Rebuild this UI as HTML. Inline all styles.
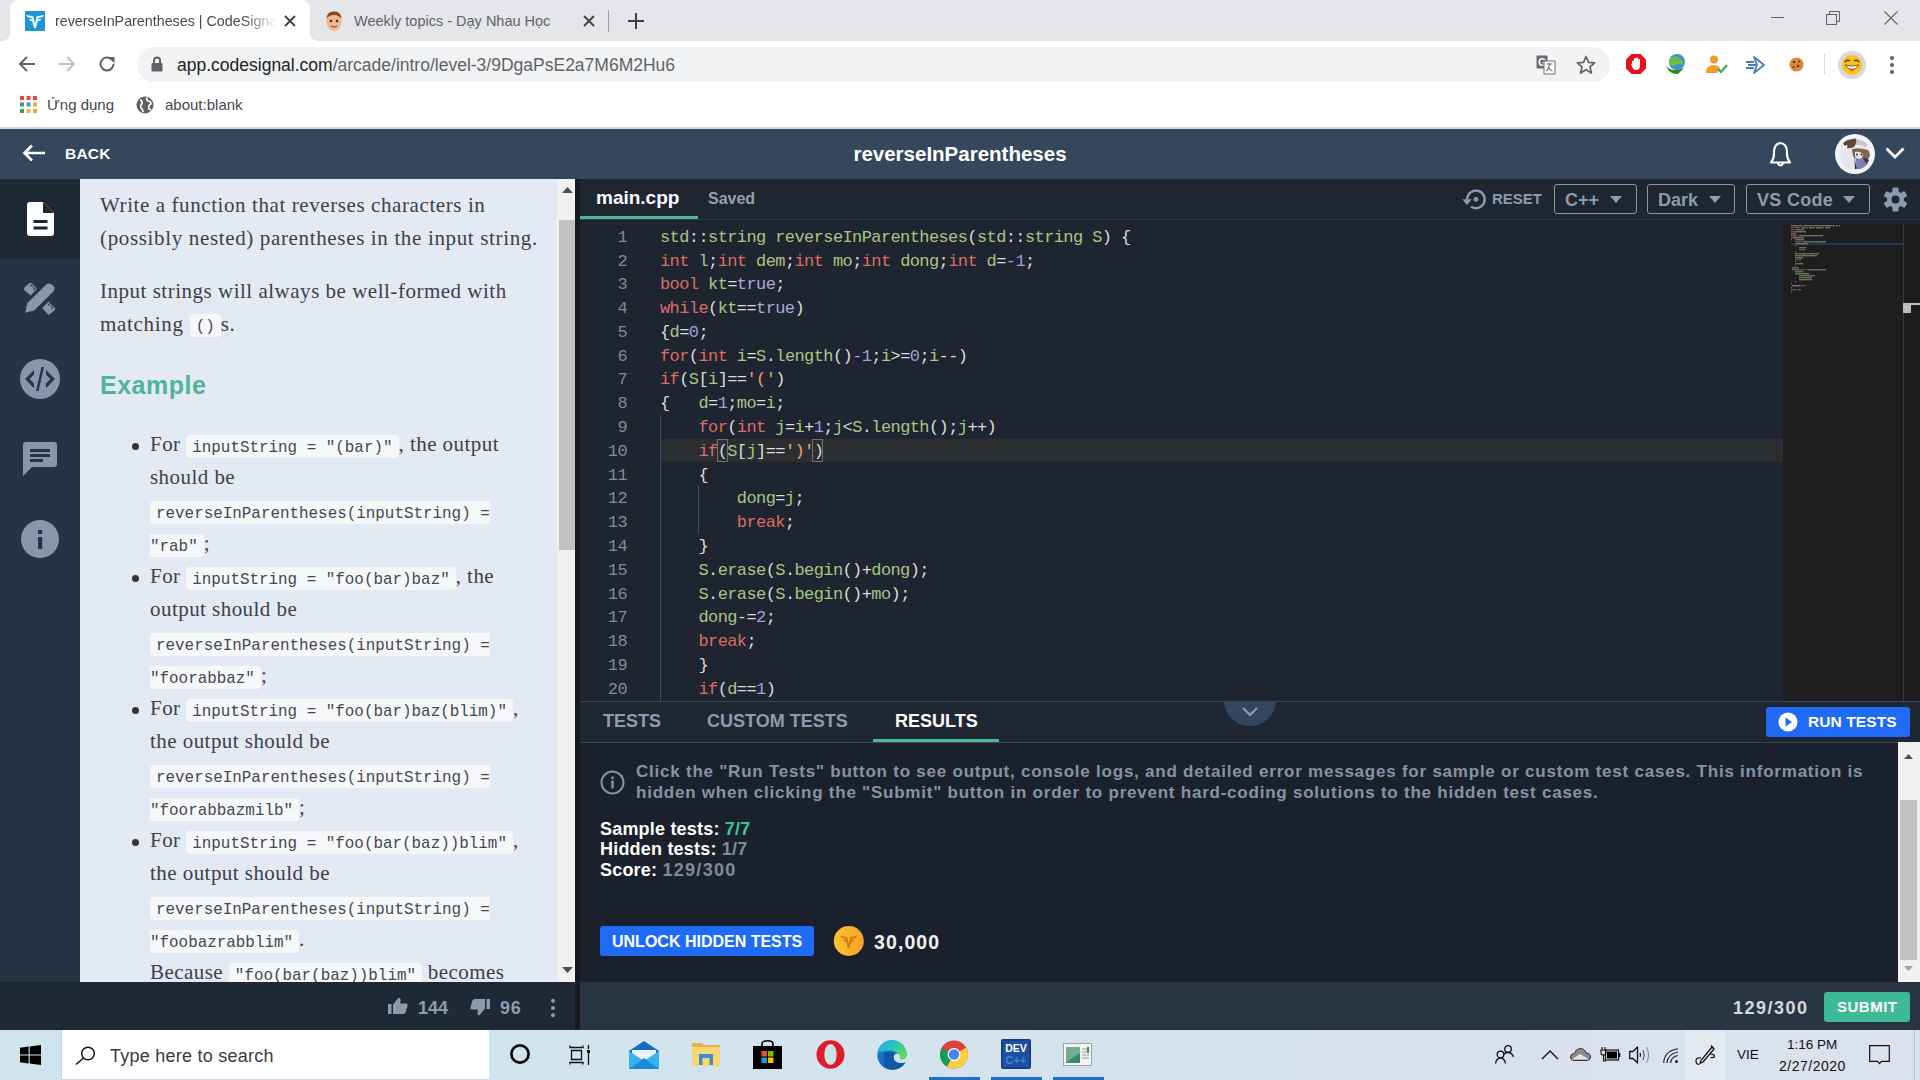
<!DOCTYPE html>
<html><head><meta charset="utf-8">
<style>
*{box-sizing:border-box;margin:0;padding:0}
html,body{width:1920px;height:1080px;overflow:hidden;background:#fff;font-family:"Liberation Sans",sans-serif}
.a{position:absolute}
svg{position:absolute;overflow:visible}
/* chrome */
#tabs{left:0;top:0;width:1920px;height:41px;background:#e4e6e9}
#tab1{left:10px;top:0;width:300px;height:41px;background:#fff;border-radius:8px 8px 0 0}
.tabt{font-size:14.3px;color:#45494d;top:12.5px;white-space:nowrap}
#toolbar{left:0;top:41px;width:1920px;height:46px;background:#fff}
#omni{left:137px;top:47px;width:1473px;height:35px;background:#f1f3f4;border-radius:18px}
#bm{left:0;top:87px;width:1920px;height:40px;background:#fff}
#bmline{left:0;top:127px;width:1920px;height:2px;background:#d3d6da}
/* codesignal header */
#hdr{left:0;top:129px;width:1920px;height:50px;background:#34475c}
#side{left:0;top:179px;width:80px;height:803px;background:#253345}
#sideact{left:0;top:179px;width:80px;height:80px;background:#1f2835}
#desc{left:80px;top:179px;width:477px;height:803px;background:#e4eaf3;overflow:hidden}
#dscroll{left:557px;top:179px;width:18px;height:803px;background:#f1f1f1}
#dthumb{left:559px;top:220px;width:16px;height:330px;background:#c1c1c1}
#divider{left:575px;top:179px;width:5px;height:851px;background:#171a20}
#lfoot{left:0;top:982px;width:575px;height:48px;background:#1f2936}
/* editor */
#edtop{left:580px;top:179px;width:1340px;height:41px;background:#1e2631;border-bottom:1px solid #2f3a47}
#code{left:580px;top:220px;width:1340px;height:481px;background:#1e2430}
#rtabs{left:580px;top:701px;width:1340px;height:42px;background:#1f2733;border-top:1px solid #3a4757;border-bottom:1px solid #3a4757}
#results{left:580px;top:743px;width:1318px;height:239px;background:#1b212c}
#rscroll{left:1898px;top:742px;width:22px;height:240px;background:#f1f1f1}
#rfoot{left:580px;top:982px;width:1340px;height:48px;background:#2a3544}
/* taskbar */
#task{left:0;top:1030px;width:1920px;height:50px;background:#d5e3ee}
#search{left:61px;top:1030px;width:428px;height:50px;background:#fff;border:1px solid #c8d3dc}

.dp{position:absolute;left:20px;font-family:"Liberation Serif",serif;font-size:21px;line-height:33px;letter-spacing:0.45px;color:#3b414c;white-space:nowrap}
.ic{font-family:"Liberation Mono",monospace;font-size:15.9px;line-height:10px;letter-spacing:0;background:#f6f7f9;border-radius:4px;padding:3.5px 6px 1.5px;color:#424853}
.bul{position:absolute;left:51.5px;width:7px;height:7px;border-radius:50%;background:#30353d}

.ln{position:absolute;left:580px;width:47px;text-align:right;font-family:"Liberation Mono",monospace;font-size:17px;letter-spacing:-0.6px;color:#838a94;line-height:23.78px;white-space:pre}
.cl{position:absolute;left:660px;font-family:"Liberation Mono",monospace;font-size:17px;letter-spacing:-0.6px;color:#dcdcdc;line-height:23.78px;white-space:pre}
.k{color:#dc6e63}.i{color:#a9c684}.n{color:#a0a0de}.t{color:#a9a9dc}.s{color:#eea45f}
.dd{position:absolute;top:184px;height:30px;border:1.5px solid #8a97aa;border-radius:3px}
.ddt{position:absolute;top:190px;font-size:18px;font-weight:700;color:#8d9bb0;white-space:nowrap}
.tri{position:absolute;top:196px;width:0;height:0;border-left:6.5px solid transparent;border-right:6.5px solid transparent;border-top:7px solid #8d9bb0}
</style></head><body>
<div class="a" id="tabs"></div>
<div class="a" style="left:2px;top:30px;width:316px;height:11px;background:#fff"></div>
<div class="a" style="left:0;top:25px;width:10px;height:16px;background:#e4e6e9;border-bottom-right-radius:8px"></div>
<div class="a" style="left:310px;top:25px;width:10px;height:16px;background:#e4e6e9;border-bottom-left-radius:8px"></div>
<div class="a" id="tab1"></div>
<div class="a" id="toolbar"></div>
<div class="a" id="omni"></div>
<div class="a" id="bm"></div>
<div class="a" id="bmline"></div>

<!-- TAB 1 -->
<svg style="left:25px;top:11px" width="20" height="20" viewBox="0 0 20 20"><rect width="20" height="20" fill="#1e96d2"/><path d="M0.9 3.9L8.4 5.3L10 12.6L11.6 5.3L19.1 3.9L17.4 6.3L13.4 7.1L13.1 8.2L16.3 8.1L14.7 9.9L12.8 10.2L10.8 17.3L9.2 17.3L7.2 10.2L5.3 9.9L3.7 8.1L6.9 8.2L6.6 7.1L2.6 6.3Z" fill="#e8fbff"/></svg>
<div class="a tabt" style="left:55px;width:222px;overflow:hidden;-webkit-mask-image:linear-gradient(90deg,#000 85%,transparent)">reverseInParentheses | CodeSignal</div>
<svg style="left:284px;top:15px" width="12" height="12" viewBox="0 0 12 12"><path d="M1 1L11 11M11 1L1 11" stroke="#3c4043" stroke-width="1.8"/></svg>
<!-- TAB 2 -->
<svg style="left:325px;top:10px" width="18" height="22" viewBox="0 0 18 22"><ellipse cx="9" cy="12" rx="7.5" ry="9" fill="#f2b88b"/><path d="M1.5 9 Q2 1 9 1.5 Q16 1 16.5 9 Q14 5 9 5 Q4 5 1.5 9Z" fill="#8a4b22"/><circle cx="6" cy="11" r="1.3" fill="#333"/><circle cx="12" cy="11" r="1.3" fill="#333"/><path d="M6 16 Q9 18 12 16" stroke="#a33" stroke-width="1.2" fill="none"/></svg>
<div class="a tabt" style="left:354px;color:#5f6368;font-size:14.5px">Weekly topics - Dạy Nhau Học</div>
<svg style="left:583px;top:15px" width="12" height="12" viewBox="0 0 12 12"><path d="M1 1L11 11M11 1L1 11" stroke="#3c4043" stroke-width="1.8"/></svg>
<div class="a" style="left:608px;top:10px;width:1px;height:22px;background:#9aa0a6"></div>
<svg style="left:627px;top:12px" width="18" height="18" viewBox="0 0 18 18"><path d="M9 1V17M1 9H17" stroke="#3c4043" stroke-width="2"/></svg>
<!-- window controls -->
<div class="a" style="left:1771px;top:17px;width:13px;height:1px;background:#5f6368"></div>
<svg style="left:1826px;top:11px" width="14" height="14" viewBox="0 0 14 14"><rect x="0.5" y="3.5" width="10" height="10" fill="none" stroke="#5f6368"/><path d="M3.5 3.5V0.5H13.5V10.5H10.5" fill="none" stroke="#5f6368"/></svg>
<svg style="left:1884px;top:11px" width="14" height="14" viewBox="0 0 14 14"><path d="M0.5 0.5L13.5 13.5M13.5 0.5L0.5 13.5" stroke="#5f6368" stroke-width="1.1"/></svg>
<!-- toolbar -->
<svg style="left:18px;top:55px" width="18" height="18" viewBox="0 0 18 18"><path d="M17 9H2M9 2L2 9L9 16" stroke="#5f6368" stroke-width="2" fill="none"/></svg>
<svg style="left:58px;top:55px" width="18" height="18" viewBox="0 0 18 18"><path d="M1 9H16M9 2L16 9L9 16" stroke="#bdc1c6" stroke-width="2" fill="none"/></svg>
<svg style="left:98px;top:55px" width="18" height="18" viewBox="0 0 18 18"><path d="M15.5 9A6.5 6.5 0 1 1 13.6 4.4" stroke="#5f6368" stroke-width="2" fill="none"/><path d="M10 2H16.5V8.5Z" fill="#5f6368"/></svg>
<svg style="left:151px;top:56px" width="12" height="16" viewBox="0 0 12 16"><path d="M3 7V4.5A3 3 0 0 1 9 4.5V7" stroke="#5f6368" stroke-width="2" fill="none"/><rect x="0.5" y="7" width="11" height="8.5" rx="1" fill="#5f6368"/></svg>
<div class="a" style="left:177px;top:55px;font-size:17.5px;color:#202124;white-space:nowrap">app.codesignal.com<span style="color:#5f6368">/arcade/intro/level-3/9DgaPsE2a7M6M2Hu6</span></div>
<svg style="left:1536px;top:55px" width="20" height="20" viewBox="0 0 20 20"><rect x="0.5" y="0.5" width="11" height="13" rx="1" fill="#6a6d70"/><text x="2.3" y="11" font-family="Liberation Sans" font-weight="700" font-size="10" fill="#fff">G</text><path d="M8 6H19V19H8Z" fill="#fff" stroke="#6a6d70"/><path d="M10.5 9H16.5M13.5 8V9.5Q13 14 10.5 16M12 12Q14 15 16.5 16" stroke="#6a6d70" stroke-width="1.1" fill="none"/></svg>
<svg style="left:1576px;top:55px" width="20" height="20" viewBox="0 0 20 20"><path d="M10 1.5L12.5 7.3L18.7 7.8L14 11.9L15.4 18L10 14.8L4.6 18L6 11.9L1.3 7.8L7.5 7.3Z" stroke="#5f6368" stroke-width="1.7" fill="none" stroke-linejoin="round"/></svg>
<svg style="left:1625px;top:53px" width="22" height="22" viewBox="0 0 22 22"><path d="M6.5 1H15.5L21 6.5V15.5L15.5 21H6.5L1 15.5V6.5Z" fill="#e8101d"/><path d="M7 13V8.5Q7 7.5 8 7.5Q9 7.5 9 8.5V6Q9 5 10 5Q11 5 11 6V5.5Q11 4.5 12 4.5Q13 4.5 13 5.5V7Q13 6 14 6Q15 6 15 7V13Q15 17 11 17Q8.5 17 7.5 14.5L6 11.5Q6 10.5 7 11Z" fill="#fff"/></svg>
<svg style="left:1664px;top:53px" width="24" height="22" viewBox="0 0 24 22"><circle cx="13" cy="9" r="8" fill="#3d8fd6"/><path d="M6 6Q10 2 14 4Q18 6 20 12Q15 10 12 12Q8 14 6 11Z" fill="#6fbf3b"/><path d="M2 13Q8 20 20 15L14 21Q6 22 2 13Z" fill="#2e8b2e"/></svg>
<svg style="left:1705px;top:54px" width="24" height="22" viewBox="0 0 24 22"><circle cx="9" cy="5.5" r="4" fill="#f29b2f"/><path d="M1 19Q1 11 9 11Q13 11 15 14L12 19Z" fill="#f29b2f"/><path d="M13 15L16 18L22 11" stroke="#3aa757" stroke-width="2.2" fill="none"/></svg>
<svg style="left:1745px;top:54px" width="24" height="22" viewBox="0 0 24 22"><path d="M9 3L19 11L9 19L12 11Z" stroke="#4a7bb5" stroke-width="1.8" fill="none" stroke-linejoin="round"/><path d="M1 8H9M3 11H12M1 14H9" stroke="#4a7bb5" stroke-width="1.8"/></svg>
<svg style="left:1788px;top:56px" width="17" height="17" viewBox="0 0 17 17"><circle cx="8.5" cy="8.5" r="7" fill="#d78a3a"/><circle cx="6" cy="6" r="1.3" fill="#6b3a12"/><circle cx="10" cy="10" r="1.3" fill="#6b3a12"/><circle cx="11" cy="5.5" r="1" fill="#6b3a12"/><circle cx="5.5" cy="11" r="1" fill="#6b3a12"/></svg>
<div class="a" style="left:1824px;top:54px;width:1px;height:20px;background:#dadce0"></div>
<div class="a" style="left:1838px;top:51px;width:28px;height:28px;border-radius:50%;background:#d9d9d9"></div>
<svg style="left:1841px;top:54px" width="22" height="22" viewBox="0 0 22 22"><circle cx="11" cy="11" r="10" fill="#f7c21a"/><path d="M4 8Q6 5 9 7M13 7Q16 5 18 8" stroke="#5a3a00" stroke-width="1.5" fill="none"/><path d="M4 11Q11 20 18 11Q11 13 4 11Z" fill="#fff" stroke="#5a3a00" stroke-width="0.8"/><path d="M8 15Q11 19 14 15Z" fill="#e53935"/></svg>
<svg style="left:1889px;top:55px" width="6" height="20" viewBox="0 0 6 20"><circle cx="3" cy="3" r="2.1" fill="#5f6368"/><circle cx="3" cy="10" r="2.1" fill="#5f6368"/><circle cx="3" cy="17" r="2.1" fill="#5f6368"/></svg>
<!-- bookmarks -->
<svg style="left:20px;top:96px" width="17" height="17" viewBox="0 0 17 17"><rect x="0.0" y="0.0" width="4" height="4" fill="#e04a3f"/><rect x="6.5" y="0.0" width="4" height="4" fill="#e04a3f"/><rect x="13.0" y="0.0" width="4" height="4" fill="#e04a3f"/><rect x="0.0" y="6.5" width="4" height="4" fill="#3aa05a"/><rect x="6.5" y="6.5" width="4" height="4" fill="#4a8af0"/><rect x="13.0" y="6.5" width="4" height="4" fill="#f2a93b"/><rect x="0.0" y="13.0" width="4" height="4" fill="#3aa05a"/><rect x="6.5" y="13.0" width="4" height="4" fill="#f2b33b"/><rect x="13.0" y="13.0" width="4" height="4" fill="#f2a93b"/></svg>
<div class="a" style="left:47px;top:96px;font-size:15px;color:#45484c;white-space:nowrap">Ứng dụng</div>
<svg style="left:136px;top:96px" width="18" height="18" viewBox="0 0 18 18"><circle cx="9" cy="9" r="8.5" fill="#5f6368"/><path d="M4 4Q7 5 6 8Q4 9 5 12Q7 13 7 16M11 1.5Q10 4 12 5Q15 5 15 8Q12 9 13 13L15 14" stroke="#fff" stroke-width="1.6" fill="none"/></svg>
<div class="a" style="left:165px;top:96px;font-size:15px;color:#45484c;white-space:nowrap">about:blank</div>
<div class="a" id="hdr"></div>

<!-- CS header -->
<svg style="left:22px;top:144px" width="24" height="18" viewBox="0 0 24 18"><path d="M23 9H2.5M10 1.5L2.5 9L10 16.5" stroke="#fff" stroke-width="2.6" fill="none"/></svg>
<div class="a" style="left:65px;top:145px;font-size:15.5px;font-weight:700;color:#fff;letter-spacing:0.2px">BACK</div>
<div class="a" style="left:0;top:142px;width:1920px;text-align:center;font-size:20.5px;font-weight:700;color:#fff">reverseInParentheses</div>
<svg style="left:1768px;top:141px" width="25" height="27" viewBox="0 0 25 27"><path d="M3 21.5Q6.5 17 6 11Q6 3 12.5 2Q19 3 19 11Q18.5 17 22 21.5Z" stroke="#fff" stroke-width="2.1" fill="none" stroke-linejoin="round"/><path d="M9.5 22Q12.5 27 15.5 22" stroke="#fff" stroke-width="2" fill="none"/></svg>
<div class="a" style="left:1835px;top:134px;width:40px;height:40px;border-radius:50%;background:#f1f3f8"></div>
<svg style="left:1839px;top:138px" width="32" height="32" viewBox="0 0 32 32"><defs><clipPath id="av"><circle cx="16" cy="16" r="16"/></clipPath></defs><g clip-path="url(#av)"><rect width="32" height="32" fill="#ecebf2"/><path d="M14 2Q22 1 29 6L27 9Q20 6 14 7Z" fill="#c9c5d4"/><path d="M2 7Q5 2 11 1.5L17 0.5Q18 5 15 9Q10 11 6 10Q3 10 2 7Z" fill="#5e4838"/><path d="M2.5 6Q5 5 8 7Q9 10 7 11Q4 11 2.5 8Z" fill="#f2efee"/><circle cx="6" cy="6.5" r="1.1" fill="#222"/><path d="M4 11Q10 12 14 14L16 31L6 31Q1 24 2 15Z" fill="#e6e4ee"/><path d="M13 11Q20 9 29 12Q32 16 30 20Q26 22 22 22Q16 22 14 18Z" fill="#7d6750"/><path d="M16 14Q21 13 24 16Q24 21 20 21Q16 21 16 17Z" fill="#e9e3df"/><circle cx="18" cy="16.5" r="0.9" fill="#222"/><circle cx="22.5" cy="16.5" r="0.9" fill="#222"/><path d="M17 21Q23 21 29 20L28 31L17 31Z" fill="#7a7fb6"/><path d="M15.5 18L17.5 31L16 31Z" fill="#1d1d22"/><path d="M24 20Q28 19 30 22L28 26Q25 23 24 20Z" fill="#3a3a44"/></g></svg>
<svg style="left:1885px;top:147px" width="20" height="13" viewBox="0 0 20 13"><path d="M1.5 1.5L10 10L18.5 1.5" stroke="#fff" stroke-width="2.8" fill="none"/></svg>
<div class="a" id="side"></div>
<div class="a" id="sideact"></div>

<!-- sidebar icons -->
<svg style="left:27px;top:202px" width="27" height="34" viewBox="0 0 27 34"><path d="M3 0H16L27 11V31Q27 34 24 34H3Q0 34 0 31V3Q0 0 3 0Z" fill="#fff"/><path d="M16 0V11H27Z" fill="#1f2835"/><rect x="6.5" y="18" width="14" height="3" fill="#1f2835"/><rect x="6.5" y="24.5" width="14" height="3" fill="#1f2835"/></svg>
<svg style="left:20px;top:278px" width="40" height="40" viewBox="0 0 40 40"><g fill="#8796a9"><path d="M5.3 34.8L7.2 25.2L26 6.8Q29.5 4 32.5 7L33.2 7.7Q36 10.8 33.3 13.6L14.2 32.6Z"/><path d="M4.3 12Q3.3 10.8 4.5 9.6L9.6 5Q10.8 4.2 12 5.2L17.2 10.8L10.6 17.6Z"/><path d="M22.2 30.2L28.6 23.6L34.6 29.6Q35.6 30.8 34.6 31.9L29.8 36.2Q28.6 37 27.5 36Z"/></g><g stroke="#253345" stroke-width="1.1"><path d="M12.4 6.2L10.2 8.4M14 7.9L12.5 9.4M15.6 9.6L13.4 11.8"/><path d="M30.2 25.2L28 27.4M31.8 26.9L30.3 28.4M33.4 28.6L31.2 30.8"/></g></svg>
<svg style="left:20px;top:359px" width="40" height="40" viewBox="0 0 40 40"><circle cx="20" cy="20" r="20" fill="#8796a9"/><path d="M14 11L5 20L14 29V24.5L9.5 20L14 15.5Z" fill="#253345"/><path d="M26 11L35 20L26 29V24.5L30.5 20L26 15.5Z" fill="#253345"/><path d="M21.5 8H24L18.5 32H16Z" fill="#253345"/></svg>
<svg style="left:23px;top:442px" width="34" height="34" viewBox="0 0 34 34"><path d="M3 0H31Q34 0 34 3V22Q34 25 31 25H9L0 34V3Q0 0 3 0Z" fill="#8796a9"/><rect x="7" y="7" width="20" height="3" fill="#253345"/><rect x="7" y="12" width="20" height="3" fill="#253345"/><rect x="7" y="17" width="13" height="3" fill="#253345"/></svg>
<svg style="left:21px;top:520px" width="38" height="38" viewBox="0 0 38 38"><circle cx="19" cy="19" r="19" fill="#8796a9"/><rect x="17" y="10" width="4.2" height="4" fill="#253345"/><rect x="17" y="17" width="4.2" height="12" fill="#253345"/></svg>
<div class="a" id="desc">
<div class="dp" style="top:10.4px"><span style="letter-spacing:0.59px">Write a function that reverses characters in</span><br><span style="letter-spacing:0.65px">(possibly nested) parentheses in the input string.</span></div>
<div class="dp" style="top:95.8px"><span style="letter-spacing:0.51px">Input strings will always be well-formed with</span><br><span style="letter-spacing:0.7px">matching </span><span class="ic">()</span>s.</div>
<div class="a" style="left:20px;top:189.8px;font-size:25px;line-height:33px;font-weight:700;color:#4fb596;letter-spacing:0.5px">Example</div>
<div class="bul" style="top:263.5px"></div>
<div class="bul" style="top:395.5px"></div>
<div class="bul" style="top:527.5px"></div>
<div class="bul" style="top:659.5px"></div>
<div class="dp" style="left:70px;top:249px">For <span class="ic">inputString = "(bar)"</span>, the output<br>should be<br><span class="ic">reverseInParentheses(inputString) =<br>"rab"</span>;<br>For <span class="ic">inputString = "foo(bar)baz"</span>, the<br>output should be<br><span class="ic">reverseInParentheses(inputString) =<br>"foorabbaz"</span>;<br>For <span class="ic">inputString = "foo(bar)baz(blim)"</span>,<br>the output should be<br><span class="ic">reverseInParentheses(inputString) =<br>"foorabbazmilb"</span>;<br>For <span class="ic">inputString = "foo(bar(baz))blim"</span>,<br>the output should be<br><span class="ic">reverseInParentheses(inputString) =<br>"foobazrabblim"</span>.<br>Because <span class="ic">"foo(bar(baz))blim"</span> becomes</div>
</div>
<div class="a" id="dscroll"></div>
<div class="a" id="dthumb"></div>
<svg style="left:561px;top:186px" width="13" height="8" viewBox="0 0 13 8"><path d="M1 7L6.5 1L12 7Z" fill="#505050"/></svg>
<svg style="left:561px;top:966px" width="13" height="8" viewBox="0 0 13 8"><path d="M1 1L6.5 7L12 1Z" fill="#505050"/></svg>
<div class="a" id="divider"></div>
<div class="a" id="lfoot"></div>
<svg style="left:388px;top:997px" width="20" height="17" viewBox="0 0 20 17"><rect x="0" y="7" width="3.5" height="10" fill="#8d9bb0"/><path d="M5 7.5L9.5 2Q10.5 0 12 1Q13 2 12.5 4L12 6.5H18Q20 6.5 19.5 9L17.5 15.5Q17 17 15 17H5Z" fill="#8d9bb0"/></svg>
<div class="a" style="left:418px;top:998px;font-size:18px;font-weight:700;color:#8d9bb0">144</div>
<svg style="left:470px;top:999px" width="20" height="17" viewBox="0 0 20 17"><rect x="16.5" y="0" width="3.5" height="10" fill="#8d9bb0"/><path d="M15 9.5L10.5 15Q9.5 17 8 16Q7 15 7.5 13L8 10.5H2Q0 10.5 0.5 8L2.5 1.5Q3 0 5 0H15Z" fill="#8d9bb0"/></svg>
<div class="a" style="left:500px;top:998px;font-size:18px;font-weight:700;color:#8d9bb0;letter-spacing:0.8px">96</div>
<svg style="left:550px;top:998px" width="6" height="20" viewBox="0 0 6 20"><circle cx="3" cy="2.7" r="2" fill="#8d9bb0"/><circle cx="3" cy="10" r="2" fill="#8d9bb0"/><circle cx="3" cy="17.3" r="2" fill="#8d9bb0"/></svg>

<div class="a" id="edtop"></div>
<div class="a" id="code"></div>

<div class="a" style="left:596px;top:187px;font-size:19px;font-weight:700;color:#fff">main.cpp</div>
<div class="a" style="left:580px;top:216px;width:118px;height:3px;background:#4fb596"></div>
<div class="a" style="left:708px;top:190px;font-size:16px;font-weight:700;color:#979fab">Saved</div>
<svg style="left:1455px;top:183px" width="40" height="32" viewBox="0 0 40 32"><path d="M12.1 16.4A8.8 8.8 0 1 1 15.88 23.63" stroke="#8d9bb0" stroke-width="2.4" fill="none"/><path d="M7.2 16.2H16.8L12 21.9Z" fill="#8d9bb0"/><circle cx="20.9" cy="16.4" r="2.4" fill="#8d9bb0"/></svg>
<div class="a" style="left:1492px;top:190px;font-size:15px;font-weight:700;color:#8d9bb0">RESET</div>
<div class="dd" style="left:1554px;width:83px"></div><div class="ddt" style="left:1565px">C++</div><div class="tri" style="left:1610px"></div>
<div class="dd" style="left:1647px;width:88px"></div><div class="ddt" style="left:1658px">Dark</div><div class="tri" style="left:1709px"></div>
<div class="dd" style="left:1746px;width:124px"></div><div class="ddt" style="left:1757px;letter-spacing:0.3px">VS Code</div><div class="tri" style="left:1843px"></div>
<svg style="left:1883px;top:186.8px" width="25" height="25" viewBox="-12.5 -12.5 25 25"><g fill="#8d9bb0"><circle r="8.5"/><rect x="-3" y="-12" width="6" height="24" rx="1"/><rect x="-3" y="-12" width="6" height="24" rx="1" transform="rotate(60)"/><rect x="-3" y="-12" width="6" height="24" rx="1" transform="rotate(120)"/></g><circle r="4" fill="#1e2631"/></svg>
<!-- minimap -->
<div class="a" style="left:1783px;top:224px;width:120px;height:477px;background:#1e1e1e"></div>
<div class="a" style="left:1791px;top:243px;width:112px;height:2px;background:#24384d"></div>
<svg style="left:1791px;top:224.8px;opacity:0.6" width="112" height="70" viewBox="0 0 112 70"><rect x="0" y="0" width="3" height="1.4" fill="#8fa772"/><rect x="3" y="0" width="2" height="1.4" fill="#b0b0b0"/><rect x="5" y="0" width="6" height="1.4" fill="#8fa772"/><rect x="12" y="0" width="20" height="1.4" fill="#8fa772"/><rect x="32" y="0" width="1" height="1.4" fill="#b0b0b0"/><rect x="33" y="0" width="3" height="1.4" fill="#8fa772"/><rect x="36" y="0" width="2" height="1.4" fill="#b0b0b0"/><rect x="38" y="0" width="6" height="1.4" fill="#8fa772"/><rect x="45" y="0" width="1" height="1.4" fill="#8fa772"/><rect x="46" y="0" width="1" height="1.4" fill="#b0b0b0"/><rect x="48" y="0" width="1" height="1.4" fill="#b0b0b0"/><rect x="0" y="2" width="3" height="1.4" fill="#b5615a"/><rect x="4" y="2" width="1" height="1.4" fill="#8fa772"/><rect x="5" y="2" width="1" height="1.4" fill="#b0b0b0"/><rect x="6" y="2" width="3" height="1.4" fill="#b5615a"/><rect x="10" y="2" width="3" height="1.4" fill="#8fa772"/><rect x="13" y="2" width="1" height="1.4" fill="#b0b0b0"/><rect x="14" y="2" width="3" height="1.4" fill="#b5615a"/><rect x="18" y="2" width="2" height="1.4" fill="#8fa772"/><rect x="20" y="2" width="1" height="1.4" fill="#b0b0b0"/><rect x="21" y="2" width="3" height="1.4" fill="#b5615a"/><rect x="25" y="2" width="4" height="1.4" fill="#8fa772"/><rect x="29" y="2" width="1" height="1.4" fill="#b0b0b0"/><rect x="30" y="2" width="3" height="1.4" fill="#b5615a"/><rect x="34" y="2" width="1" height="1.4" fill="#8fa772"/><rect x="35" y="2" width="1" height="1.4" fill="#b0b0b0"/><rect x="36" y="2" width="2" height="1.4" fill="#8a8ac0"/><rect x="38" y="2" width="1" height="1.4" fill="#b0b0b0"/><rect x="0" y="4" width="4" height="1.4" fill="#b5615a"/><rect x="5" y="4" width="2" height="1.4" fill="#8fa772"/><rect x="7" y="4" width="1" height="1.4" fill="#b0b0b0"/><rect x="8" y="4" width="4" height="1.4" fill="#9090c0"/><rect x="12" y="4" width="1" height="1.4" fill="#b0b0b0"/><rect x="0" y="6" width="5" height="1.4" fill="#b5615a"/><rect x="5" y="6" width="1" height="1.4" fill="#b0b0b0"/><rect x="6" y="6" width="2" height="1.4" fill="#8fa772"/><rect x="8" y="6" width="2" height="1.4" fill="#b0b0b0"/><rect x="10" y="6" width="4" height="1.4" fill="#9090c0"/><rect x="14" y="6" width="1" height="1.4" fill="#b0b0b0"/><rect x="0" y="8" width="1" height="1.4" fill="#b0b0b0"/><rect x="1" y="8" width="1" height="1.4" fill="#8fa772"/><rect x="2" y="8" width="1" height="1.4" fill="#b0b0b0"/><rect x="3" y="8" width="1" height="1.4" fill="#8a8ac0"/><rect x="4" y="8" width="1" height="1.4" fill="#b0b0b0"/><rect x="0" y="10" width="3" height="1.4" fill="#b5615a"/><rect x="3" y="10" width="1" height="1.4" fill="#b0b0b0"/><rect x="4" y="10" width="3" height="1.4" fill="#b5615a"/><rect x="8" y="10" width="1" height="1.4" fill="#8fa772"/><rect x="9" y="10" width="1" height="1.4" fill="#b0b0b0"/><rect x="10" y="10" width="1" height="1.4" fill="#8fa772"/><rect x="11" y="10" width="1" height="1.4" fill="#b0b0b0"/><rect x="12" y="10" width="6" height="1.4" fill="#8fa772"/><rect x="18" y="10" width="2" height="1.4" fill="#b0b0b0"/><rect x="20" y="10" width="2" height="1.4" fill="#8a8ac0"/><rect x="22" y="10" width="1" height="1.4" fill="#b0b0b0"/><rect x="23" y="10" width="1" height="1.4" fill="#8fa772"/><rect x="24" y="10" width="2" height="1.4" fill="#b0b0b0"/><rect x="26" y="10" width="1" height="1.4" fill="#8a8ac0"/><rect x="27" y="10" width="1" height="1.4" fill="#b0b0b0"/><rect x="28" y="10" width="1" height="1.4" fill="#8fa772"/><rect x="29" y="10" width="3" height="1.4" fill="#b0b0b0"/><rect x="0" y="12" width="2" height="1.4" fill="#b5615a"/><rect x="2" y="12" width="1" height="1.4" fill="#b0b0b0"/><rect x="3" y="12" width="1" height="1.4" fill="#8fa772"/><rect x="4" y="12" width="1" height="1.4" fill="#b0b0b0"/><rect x="5" y="12" width="1" height="1.4" fill="#8fa772"/><rect x="6" y="12" width="3" height="1.4" fill="#b0b0b0"/><rect x="9" y="12" width="3" height="1.4" fill="#c08a55"/><rect x="12" y="12" width="1" height="1.4" fill="#b0b0b0"/><rect x="0" y="14" width="1" height="1.4" fill="#b0b0b0"/><rect x="4" y="14" width="1" height="1.4" fill="#8fa772"/><rect x="5" y="14" width="1" height="1.4" fill="#b0b0b0"/><rect x="6" y="14" width="1" height="1.4" fill="#8a8ac0"/><rect x="7" y="14" width="1" height="1.4" fill="#b0b0b0"/><rect x="8" y="14" width="2" height="1.4" fill="#8fa772"/><rect x="10" y="14" width="1" height="1.4" fill="#b0b0b0"/><rect x="11" y="14" width="1" height="1.4" fill="#8fa772"/><rect x="12" y="14" width="1" height="1.4" fill="#b0b0b0"/><rect x="4" y="16" width="3" height="1.4" fill="#b5615a"/><rect x="7" y="16" width="1" height="1.4" fill="#b0b0b0"/><rect x="8" y="16" width="3" height="1.4" fill="#b5615a"/><rect x="12" y="16" width="1" height="1.4" fill="#8fa772"/><rect x="13" y="16" width="1" height="1.4" fill="#b0b0b0"/><rect x="14" y="16" width="1" height="1.4" fill="#8fa772"/><rect x="15" y="16" width="1" height="1.4" fill="#b0b0b0"/><rect x="16" y="16" width="1" height="1.4" fill="#8a8ac0"/><rect x="17" y="16" width="1" height="1.4" fill="#b0b0b0"/><rect x="18" y="16" width="1" height="1.4" fill="#8fa772"/><rect x="19" y="16" width="1" height="1.4" fill="#b0b0b0"/><rect x="20" y="16" width="1" height="1.4" fill="#8fa772"/><rect x="21" y="16" width="1" height="1.4" fill="#b0b0b0"/><rect x="22" y="16" width="6" height="1.4" fill="#8fa772"/><rect x="28" y="16" width="3" height="1.4" fill="#b0b0b0"/><rect x="31" y="16" width="1" height="1.4" fill="#8fa772"/><rect x="32" y="16" width="3" height="1.4" fill="#b0b0b0"/><rect x="4" y="18" width="2" height="1.4" fill="#b5615a"/><rect x="6" y="18" width="1" height="1.4" fill="#b0b0b0"/><rect x="7" y="18" width="1" height="1.4" fill="#8fa772"/><rect x="8" y="18" width="1" height="1.4" fill="#b0b0b0"/><rect x="9" y="18" width="1" height="1.4" fill="#8fa772"/><rect x="10" y="18" width="3" height="1.4" fill="#b0b0b0"/><rect x="13" y="18" width="3" height="1.4" fill="#c08a55"/><rect x="16" y="18" width="1" height="1.4" fill="#b0b0b0"/><rect x="4" y="20" width="1" height="1.4" fill="#b0b0b0"/><rect x="8" y="22" width="4" height="1.4" fill="#8fa772"/><rect x="12" y="22" width="1" height="1.4" fill="#b0b0b0"/><rect x="13" y="22" width="1" height="1.4" fill="#8fa772"/><rect x="14" y="22" width="1" height="1.4" fill="#b0b0b0"/><rect x="8" y="24" width="5" height="1.4" fill="#b5615a"/><rect x="13" y="24" width="1" height="1.4" fill="#b0b0b0"/><rect x="4" y="26" width="1" height="1.4" fill="#b0b0b0"/><rect x="4" y="28" width="1" height="1.4" fill="#8fa772"/><rect x="5" y="28" width="1" height="1.4" fill="#b0b0b0"/><rect x="6" y="28" width="5" height="1.4" fill="#8fa772"/><rect x="11" y="28" width="1" height="1.4" fill="#b0b0b0"/><rect x="12" y="28" width="1" height="1.4" fill="#8fa772"/><rect x="13" y="28" width="1" height="1.4" fill="#b0b0b0"/><rect x="14" y="28" width="5" height="1.4" fill="#8fa772"/><rect x="19" y="28" width="3" height="1.4" fill="#b0b0b0"/><rect x="22" y="28" width="4" height="1.4" fill="#8fa772"/><rect x="26" y="28" width="2" height="1.4" fill="#b0b0b0"/><rect x="4" y="30" width="1" height="1.4" fill="#8fa772"/><rect x="5" y="30" width="1" height="1.4" fill="#b0b0b0"/><rect x="6" y="30" width="5" height="1.4" fill="#8fa772"/><rect x="11" y="30" width="1" height="1.4" fill="#b0b0b0"/><rect x="12" y="30" width="1" height="1.4" fill="#8fa772"/><rect x="13" y="30" width="1" height="1.4" fill="#b0b0b0"/><rect x="14" y="30" width="5" height="1.4" fill="#8fa772"/><rect x="19" y="30" width="3" height="1.4" fill="#b0b0b0"/><rect x="22" y="30" width="2" height="1.4" fill="#8fa772"/><rect x="24" y="30" width="2" height="1.4" fill="#b0b0b0"/><rect x="4" y="32" width="4" height="1.4" fill="#8fa772"/><rect x="8" y="32" width="2" height="1.4" fill="#b0b0b0"/><rect x="10" y="32" width="1" height="1.4" fill="#8a8ac0"/><rect x="11" y="32" width="1" height="1.4" fill="#b0b0b0"/><rect x="4" y="34" width="5" height="1.4" fill="#b5615a"/><rect x="9" y="34" width="1" height="1.4" fill="#b0b0b0"/><rect x="4" y="36" width="1" height="1.4" fill="#b0b0b0"/><rect x="4" y="38" width="2" height="1.4" fill="#b5615a"/><rect x="6" y="38" width="1" height="1.4" fill="#b0b0b0"/><rect x="7" y="38" width="1" height="1.4" fill="#8fa772"/><rect x="8" y="38" width="2" height="1.4" fill="#b0b0b0"/><rect x="10" y="38" width="1" height="1.4" fill="#8a8ac0"/><rect x="11" y="38" width="1" height="1.4" fill="#b0b0b0"/><rect x="4" y="40" width="1" height="1.4" fill="#b0b0b0"/><rect x="1" y="42" width="7" height="1.4" fill="#8fa772"/><rect x="1" y="44" width="7" height="1.4" fill="#8fa772"/><rect x="8" y="44" width="7" height="1.4" fill="#b5615a"/><rect x="16" y="44" width="19" height="1.4" fill="#8fa772"/><rect x="4" y="46" width="8" height="1.4" fill="#8fa772"/><rect x="4" y="48" width="8" height="1.4" fill="#8fa772"/><rect x="12" y="48" width="6" height="1.4" fill="#b0b0b0"/><rect x="8" y="50" width="16" height="1.4" fill="#8fa772"/><rect x="8" y="52" width="13" height="1.4" fill="#8fa772"/><rect x="8" y="54" width="13" height="1.4" fill="#8fa772"/><rect x="4" y="56" width="1" height="1.4" fill="#b0b0b0"/><rect x="0" y="58" width="1" height="1.4" fill="#b0b0b0"/><rect x="1" y="60" width="8" height="1.4" fill="#b0b0b0"/><rect x="9" y="60" width="6" height="1.4" fill="#b5615a"/><rect x="0" y="62" width="1" height="1.4" fill="#b0b0b0"/><rect x="0" y="64" width="6" height="1.4" fill="#b5615a"/><rect x="7" y="64" width="3" height="1.4" fill="#8fa772"/><rect x="0" y="66" width="1" height="1.4" fill="#b0b0b0"/></svg>
<div class="a" style="left:1903px;top:224px;width:17px;height:477px;background:#1b1b1b;border-left:1px solid #3a3a3a"></div>
<div class="a" style="left:1903px;top:303px;width:17px;height:10px;border-top:2px solid #bbb"></div>
<div class="a" style="left:1903px;top:305px;width:8px;height:8px;background:#bbb"></div>
<div class="a" style="left:660px;top:438.5px;width:1123px;height:23.78px;background:#2b2d31"></div>
<div class="a" style="left:717px;top:439px;width:11px;height:23px;border:1px solid #70736c"></div>
<div class="a" style="left:812px;top:439px;width:11px;height:23px;border:1px solid #70736c"></div>
<div class="a" style="left:660px;top:415px;width:1px;height:286px;background:#454c57"></div>
<div class="a" style="left:698px;top:486px;width:1px;height:48px;background:#454c57"></div>
<div class="ln" style="top:225.80px">1</div>
<div class="cl" style="top:225.80px"><span class="i">std</span>::<span class="i">string</span> <span class="i">reverseInParentheses</span>(<span class="i">std</span>::<span class="i">string</span> <span class="i">S</span>) {</div>
<div class="ln" style="top:249.58px">2</div>
<div class="cl" style="top:249.58px"><span class="k">int</span> <span class="i">l</span>;<span class="k">int</span> <span class="i">dem</span>;<span class="k">int</span> <span class="i">mo</span>;<span class="k">int</span> <span class="i">dong</span>;<span class="k">int</span> <span class="i">d</span>=<span class="n">-1</span>;</div>
<div class="ln" style="top:273.36px">3</div>
<div class="cl" style="top:273.36px"><span class="k">bool</span> <span class="i">kt</span>=<span class="t">true</span>;</div>
<div class="ln" style="top:297.14px">4</div>
<div class="cl" style="top:297.14px"><span class="k">while</span>(<span class="i">kt</span>==<span class="t">true</span>)</div>
<div class="ln" style="top:320.92px">5</div>
<div class="cl" style="top:320.92px">{<span class="i">d</span>=<span class="n">0</span>;</div>
<div class="ln" style="top:344.70px">6</div>
<div class="cl" style="top:344.70px"><span class="k">for</span>(<span class="k">int</span> <span class="i">i</span>=<span class="i">S</span>.<span class="i">length</span>()<span class="n">-1</span>;<span class="i">i</span>&gt;=<span class="n">0</span>;<span class="i">i</span>--)</div>
<div class="ln" style="top:368.48px">7</div>
<div class="cl" style="top:368.48px"><span class="k">if</span>(<span class="i">S</span>[<span class="i">i</span>]==<span class="s">'('</span>)</div>
<div class="ln" style="top:392.26px">8</div>
<div class="cl" style="top:392.26px">{   <span class="i">d</span>=<span class="n">1</span>;<span class="i">mo</span>=<span class="i">i</span>;</div>
<div class="ln" style="top:416.04px">9</div>
<div class="cl" style="top:416.04px">    <span class="k">for</span>(<span class="k">int</span> <span class="i">j</span>=<span class="i">i</span>+<span class="n">1</span>;<span class="i">j</span>&lt;<span class="i">S</span>.<span class="i">length</span>();<span class="i">j</span>++)</div>
<div class="ln" style="top:439.82px">10</div>
<div class="cl" style="top:439.82px">    <span class="k">if</span>(<span class="i">S</span>[<span class="i">j</span>]==<span class="s">')'</span>)</div>
<div class="ln" style="top:463.60px">11</div>
<div class="cl" style="top:463.60px">    {</div>
<div class="ln" style="top:487.38px">12</div>
<div class="cl" style="top:487.38px">        <span class="i">dong</span>=<span class="i">j</span>;</div>
<div class="ln" style="top:511.16px">13</div>
<div class="cl" style="top:511.16px">        <span class="k">break</span>;</div>
<div class="ln" style="top:534.94px">14</div>
<div class="cl" style="top:534.94px">    }</div>
<div class="ln" style="top:558.72px">15</div>
<div class="cl" style="top:558.72px">    <span class="i">S</span>.<span class="i">erase</span>(<span class="i">S</span>.<span class="i">begin</span>()+<span class="i">dong</span>);</div>
<div class="ln" style="top:582.50px">16</div>
<div class="cl" style="top:582.50px">    <span class="i">S</span>.<span class="i">erase</span>(<span class="i">S</span>.<span class="i">begin</span>()+<span class="i">mo</span>);</div>
<div class="ln" style="top:606.28px">17</div>
<div class="cl" style="top:606.28px">    <span class="i">dong</span>-=<span class="n">2</span>;</div>
<div class="ln" style="top:630.06px">18</div>
<div class="cl" style="top:630.06px">    <span class="k">break</span>;</div>
<div class="ln" style="top:653.84px">19</div>
<div class="cl" style="top:653.84px">    }</div>
<div class="ln" style="top:677.62px">20</div>
<div class="cl" style="top:677.62px">    <span class="k">if</span>(<span class="i">d</span>==<span class="n">1</span>)</div>
<div class="a" id="rtabs"></div>
<div class="a" id="results"></div>

<div class="a" style="left:603px;top:711px;font-size:18px;font-weight:700;color:#8d9bb0">TESTS</div>
<div class="a" style="left:707px;top:711px;font-size:18px;font-weight:700;color:#8d9bb0">CUSTOM TESTS</div>
<div class="a" style="left:895px;top:711px;font-size:18px;font-weight:700;color:#fff">RESULTS</div>
<div class="a" style="left:873px;top:739px;width:126px;height:3px;background:#4fb596"></div>
<div class="a" style="left:1224px;top:680px;width:52px;height:46px;border-radius:0 0 26px 26px;background:#34465d;clip-path:inset(21px 0 0 0)"></div>
<svg style="left:1241px;top:706px" width="18" height="11" viewBox="0 0 18 11"><path d="M2 2L9 9L16 2" stroke="#8d9bb0" stroke-width="2.2" fill="none"/></svg>
<div class="a" style="left:1766px;top:707px;width:144px;height:30px;border-radius:3px;background:#1f6bf5"></div>
<svg style="left:1778px;top:712px" width="20" height="20" viewBox="0 0 20 20"><circle cx="10" cy="10" r="9.5" fill="#fff"/><path d="M7.5 5.5L14 10L7.5 14.5Z" fill="#1f6bf5"/></svg>
<div class="a" style="left:1808px;top:713px;font-size:15.5px;font-weight:700;color:#fff;letter-spacing:0.1px">RUN TESTS</div>
<svg style="left:600px;top:770px" width="25" height="25" viewBox="0 0 25 25"><circle cx="12.5" cy="12.5" r="11" stroke="#8593a6" stroke-width="2" fill="none"/><rect x="11.3" y="6.5" width="2.4" height="2.6" fill="#8593a6"/><rect x="11.3" y="10.5" width="2.4" height="8" fill="#8593a6"/></svg>
<div class="a" style="left:636px;top:762px;font-size:17px;line-height:20.7px;font-weight:700;color:#8593a6;letter-spacing:0.77px;white-space:nowrap">Click the "Run Tests" button to see output, console logs, and detailed error messages for sample or custom test cases. This information is<br>hidden when clicking the "Submit" button in order to prevent hard-coding solutions to the hidden test cases.</div>
<div class="a" style="left:600px;top:818.5px;font-size:18px;line-height:20.7px;font-weight:700;color:#fff;letter-spacing:0.2px;white-space:nowrap">Sample tests: <span style="color:#3fc29b">7/7</span><br>Hidden tests: <span style="color:#7e8b9d">1/7</span><br>Score: <span style="color:#7e8b9d;letter-spacing:1.3px">129/300</span></div>
<div class="a" style="left:600px;top:926px;width:214px;height:30px;border-radius:3px;background:#1f6bf5"></div>
<div class="a" style="left:612px;top:932.5px;font-size:16px;font-weight:700;color:#fff;letter-spacing:0">UNLOCK HIDDEN TESTS</div>
<svg style="left:833px;top:926px" width="31" height="31" viewBox="0 0 31 31"><defs><linearGradient id="cg" x1="0" x2="1"><stop offset="0" stop-color="#fbc530"/><stop offset="0.5" stop-color="#f9b22c"/><stop offset="1" stop-color="#f7a22a"/></linearGradient></defs><circle cx="15.8" cy="15" r="15" fill="url(#cg)"/><g transform="translate(7.2 9.8) scale(0.93) translate(-0.9 -3.9)"><path d="M0.9 3.9L8.4 5.3L10 12.6L11.6 5.3L19.1 3.9L17.4 6.3L13.4 7.1L13.1 8.2L16.3 8.1L14.7 9.9L12.8 10.2L10.8 17.3L9.2 17.3L7.2 10.2L5.3 9.9L3.7 8.1L6.9 8.2L6.6 7.1L2.6 6.3Z" fill="#d7780c"/></g></svg>
<div class="a" style="left:874px;top:931px;font-size:19.5px;font-weight:700;color:#eef0f3;letter-spacing:1.1px">30,000</div>
<svg style="left:1898px;top:742px" width="22" height="240" viewBox="0 0 22 240"><rect width="22" height="240" fill="#f1f1f1"/><rect x="2" y="58" width="17" height="160" fill="#c1c1c1"/><path d="M6 17L10.5 12L15 17Z" fill="#505050"/><path d="M6 224L10.5 229L15 224Z" fill="#a3a3a3"/></svg>

<div class="a" id="rfoot"></div>
<div class="a" style="left:1733px;top:998px;font-size:18px;font-weight:700;color:#d5d8dd;letter-spacing:1.5px">129/300</div>
<div class="a" style="left:1824px;top:992px;width:86px;height:30px;border-radius:3px;background:#3dba95"></div>
<div class="a" style="left:1837px;top:998px;font-size:15px;font-weight:700;color:#fff;letter-spacing:0.5px">SUBMIT</div>


<div class="a" id="task" style="background:linear-gradient(90deg,#cfe3ec 0%,#d3e4ee 40%,#d6e1ed 70%,#dbe2ee 100%)"></div>
<div class="a" style="left:1685px;top:1030px;width:40px;height:50px;background:#e3e9f1"></div>
<div class="a" style="left:1914px;top:1030px;width:1px;height:50px;background:#b9c2cc"></div>
<div class="a" style="left:61px;top:1030px;width:428px;height:50px;background:#fff;border-left:1px solid #c9d5dd;border-bottom:1px solid #c9d5dd"></div>
<svg style="left:20px;top:1045px" width="21" height="20" viewBox="0 0 21 20"><path d="M0 2.8L8.6 1.6V9.4H0Z M9.7 1.4L21 0V9.4H9.7Z M0 10.5H8.6V18.4L0 17.2Z M9.7 10.5H21V20L9.7 18.6Z" fill="#000"/></svg>
<svg style="left:75px;top:1046px" width="21" height="19" viewBox="0 0 21 19"><circle cx="13" cy="7.5" r="6.3" stroke="#111" stroke-width="1.5" fill="none"/><path d="M8.5 12L1 18.5" stroke="#111" stroke-width="1.6"/></svg>
<div class="a" style="left:110px;top:1046px;font-size:18px;letter-spacing:0.25px;color:#3a3a3a;white-space:nowrap">Type here to search</div>
<svg style="left:510px;top:1044px" width="20" height="20" viewBox="0 0 20 20"><circle cx="10" cy="10" r="8.6" stroke="#000" stroke-width="2.6" fill="none"/></svg>
<svg style="left:569px;top:1045px" width="22" height="20" viewBox="0 0 22 20"><path d="M1 0.5V2.5H14V0.5M1 19.5V17.5H14V19.5M2.5 5.5H12.5V14.5H2.5Z" stroke="#111" stroke-width="1.3" fill="none"/><path d="M19.5 0V4M19.5 8V20" stroke="#111" stroke-width="1.3"/><rect x="18" y="5" width="3" height="3" fill="#111"/></svg>
<svg style="left:629px;top:1041px" width="30" height="28" viewBox="0 0 30 28"><path d="M0 10L15 0L30 10V28H0Z" fill="#0e6ec4"/><path d="M3 9H27V19H3Z" fill="#eef2f6"/><path d="M0 10L15 20L30 10V28H0Z" fill="#37b0ef"/><path d="M0 28L15 17L30 28Z" fill="#1a8bd8"/></svg>
<svg style="left:692px;top:1043px" width="28" height="23" viewBox="0 0 28 23"><path d="M0 0H10L12 2H28V23H0Z" fill="#e8b23a"/><path d="M0 4H28V23H0Z" fill="#f8d775"/><path d="M7 11H21V22H17.5V15H10.5V22H7Z" fill="#3b8fd1"/></svg>
<svg style="left:753px;top:1040px" width="29" height="29" viewBox="0 0 29 29"><path d="M9 7V4Q9 0.8 14.5 0.8Q20 0.8 20 4V7" stroke="#000" stroke-width="1.6" fill="none"/><rect x="0" y="6" width="29" height="23" fill="#000"/><rect x="8.5" y="11" width="5.5" height="5.5" fill="#f25022"/><rect x="15" y="11" width="5.5" height="5.5" fill="#7fba00"/><rect x="8.5" y="17.5" width="5.5" height="5.5" fill="#00a4ef"/><rect x="15" y="17.5" width="5.5" height="5.5" fill="#ffb900"/></svg>
<svg style="left:816px;top:1040px" width="29" height="29" viewBox="0 0 29 29"><ellipse cx="14.5" cy="14.5" rx="14" ry="14.3" fill="#e11c2a"/><ellipse cx="14.5" cy="14.5" rx="6.2" ry="10.5" fill="#cfe2ec"/></svg>
<svg style="left:877px;top:1040px" width="30" height="30" viewBox="0 0 30 30"><defs><linearGradient id="eg" x1="0" y1="0" x2="1" y2="0.6"><stop offset="0" stop-color="#2aa8e8"/><stop offset="0.5" stop-color="#27c3c0"/><stop offset="1" stop-color="#62dc55"/></linearGradient><linearGradient id="eb" x1="0" y1="0" x2="0.3" y2="1"><stop offset="0" stop-color="#1f86e0"/><stop offset="1" stop-color="#1462b8"/></linearGradient></defs><path d="M15 0.3A14.7 14.7 0 0 0 0.3 15A14.7 14.7 0 0 0 15 29.7Q24 29.5 28.5 22.5Q23 24 19 22Q16.5 20.5 16.5 17.5Q17 13.5 20.5 13.5Q23 13.8 23.5 17L24 19.5Q30 19.5 29.7 13A14.7 14.7 0 0 0 15 0.3Z" fill="url(#eb)"/><path d="M0.8 11Q4 1 15 0.3Q27 0.5 29.8 13Q30 19.5 24 19.5Q22.5 19 23 17Q22.5 13.5 19 12Q13 9.5 7 11Q3 12 0.8 11Z" fill="url(#eg)"/><path d="M7.5 12.5Q13 10.5 17.5 13Q16.3 14.8 16.5 17.5Q16.8 21 20.5 22.8Q24 23.8 28.5 22.5Q24 29.5 15 29.7Q9.5 29 8 24Q6 18 7.5 12.5Z" fill="#0f58a6"/></svg>
<svg style="left:940px;top:1040px" width="28" height="29" viewBox="0 0 28 29"><circle cx="14" cy="14.5" r="14" fill="#db4437"/><path d="M14 14.5L2 8Q0 11 0 14.5Q0 22 7 26.5Z" fill="#0f9d58"/><path d="M14 14.5L7 26.5Q10 28.5 14 28.5Q22 28.5 26.5 21Q28 18 28 14.5Q28 11 26 7.5Z" fill="#ffcd40"/><path d="M14 14.5L26 7.5H14Z" fill="#db4437"/><circle cx="14" cy="14.5" r="6.5" fill="#fff"/><circle cx="14" cy="14.5" r="5.2" fill="#4285f4"/></svg>
<div class="a" style="left:929px;top:1077px;width:51px;height:3px;background:#1a73c8"></div>
<svg style="left:1001px;top:1039px" width="30" height="30" viewBox="0 0 30 30"><rect x="0" y="0" width="30" height="30" rx="2" fill="#153a7a"/><rect x="1.5" y="1.5" width="27" height="27" rx="1" fill="#1f4f9e"/><text x="15" y="13" text-anchor="middle" font-family="Liberation Sans" font-weight="700" font-size="10.5" fill="#fff">DEV</text><text x="15" y="25" text-anchor="middle" font-family="Liberation Sans" font-weight="700" font-size="11" fill="#3c86e0">C++</text></svg>
<div class="a" style="left:991px;top:1077px;width:51px;height:3px;background:#1a73c8"></div>
<svg style="left:1063px;top:1043px" width="29" height="23" viewBox="0 0 29 23"><rect x="0.5" y="0.5" width="28" height="22" fill="#f4f4f4" stroke="#9aa3a8"/><rect x="3" y="4" width="14" height="16" fill="#3a8a6a"/><path d="M3 4H17V10Q10 14 3 20Z" fill="#6fae8e"/><path d="M19 6H26M19 9H26M19 12H26M19 15H26" stroke="#8a8a8a" stroke-width="0.9"/><rect x="24" y="4" width="2" height="6" fill="#3a8a6a"/></svg>
<div class="a" style="left:1053px;top:1077px;width:51px;height:3px;background:#1a73c8"></div>
<svg style="left:1495px;top:1045px" width="20" height="19" viewBox="0 0 20 19"><circle cx="5.5" cy="9.5" r="3.3" stroke="#111" stroke-width="1.3" fill="none"/><path d="M0.5 18.5Q1.5 13 5.5 13Q9.5 13 10.5 18.5" stroke="#111" stroke-width="1.3" fill="none"/><circle cx="13" cy="4" r="3.3" stroke="#111" stroke-width="1.3" fill="none"/><path d="M8.5 10Q9.5 7.5 13 7.5Q17 7.5 18.5 12" stroke="#111" stroke-width="1.3" fill="none"/></svg>
<svg style="left:1541px;top:1050px" width="18" height="10" viewBox="0 0 18 10"><path d="M1 9L9 1L17 9" stroke="#111" stroke-width="1.4" fill="none"/></svg>
<svg style="left:1570px;top:1047px" width="21" height="14" viewBox="0 0 21 14"><path d="M4 13.5Q0.5 13.5 0.5 10Q0.5 6.5 4.5 6.5Q5.5 2 10 1.5Q15 1.5 16 6Q20.5 6 20.5 10Q20.5 13.5 16.5 13.5Z" fill="#8d8d8d" stroke="#333" stroke-width="1"/><path d="M2 12.5L10 7L19 12.5Z" fill="#e8e6e2"/></svg>
<svg style="left:1600px;top:1047px" width="21" height="15" viewBox="0 0 21 15"><path d="M2 0V3M5 0V3M1 3H6V6Q6 8 3.5 8Q1 8 1 6Z M3.5 8V14H6" stroke="#111" stroke-width="1.1" fill="none"/><rect x="5.5" y="3" width="13" height="10" fill="none" stroke="#111" stroke-width="1.2"/><rect x="7" y="4.5" width="10" height="7" fill="#000"/><rect x="18.5" y="6" width="1.8" height="4" fill="#111"/></svg>
<svg style="left:1629px;top:1046px" width="22" height="18" viewBox="0 0 22 18"><path d="M0.7 5.5H4L8.5 1V17L4 12.5H0.7Z" stroke="#111" stroke-width="1.3" fill="none" stroke-linejoin="round"/><path d="M11 7Q12 9 11 11" stroke="#111" stroke-width="1.2" fill="none"/><path d="M14 4Q16.5 9 14 14" stroke="#444" stroke-width="1" fill="none"/><path d="M17.5 1Q21.5 9 17.5 17" stroke="#888" stroke-width="1" fill="none"/></svg>
<svg style="left:1663px;top:1048px" width="16" height="16" viewBox="0 0 16 16"><path d="M0.7 15Q1 3 15 0.7M4 15Q4.5 6 15 4M7.5 15Q8 9 15 7.5" stroke="#222" stroke-width="1.1" fill="none"/><circle cx="13.5" cy="13.5" r="1.5" fill="#111"/></svg>
<svg style="left:1695px;top:1045px" width="21" height="21" viewBox="0 0 21 21"><path d="M17 2L19 4L8 17L5 18.5L6 15.5Z" stroke="#111" stroke-width="1.2" fill="none" stroke-linejoin="round"/><path d="M16 0.5L18.5 3" stroke="#111" stroke-width="1.2"/><path d="M6 13Q1 12 1 16Q1 19.5 4.5 19.5M15 9Q20 9.5 19.5 11.5Q19 13 15.5 12.5" stroke="#111" stroke-width="1.2" fill="none"/></svg>
<div class="a" style="left:1737px;top:1047px;font-size:13.5px;color:#111;letter-spacing:0">VIE</div>
<div class="a" style="left:1787px;top:1036.5px;font-size:13.5px;color:#111">1:16 PM</div>
<div class="a" style="left:1779px;top:1058px;font-size:14px;color:#111;letter-spacing:0.5px">2/27/2020</div>
<svg style="left:1869px;top:1045px" width="21" height="20" viewBox="0 0 21 20"><path d="M0.7 0.7H20.3V16.3H12.5L10.5 18.5L8.5 16.3H0.7Z" stroke="#111" stroke-width="1.2" fill="none"/></svg>

</body></html>
